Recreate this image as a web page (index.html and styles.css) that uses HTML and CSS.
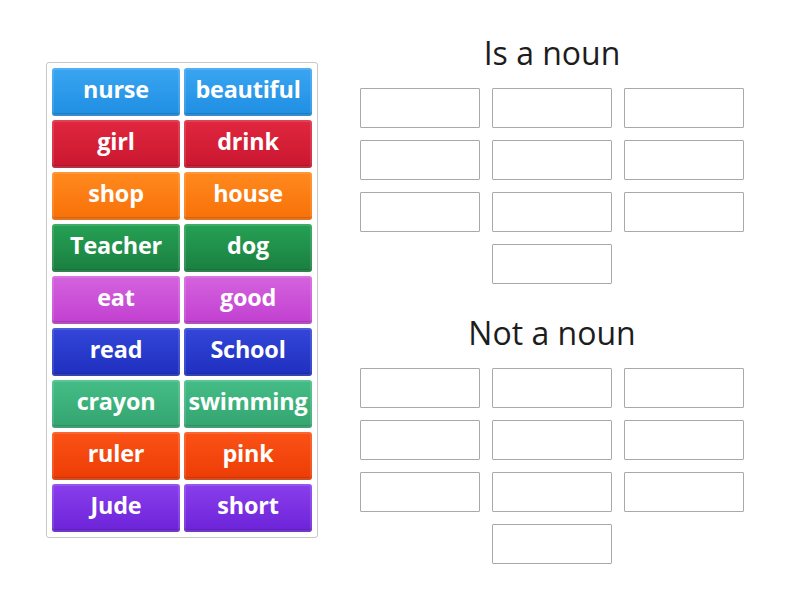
FILE: index.html
```html
<!DOCTYPE html>
<html>
<head>
<meta charset="utf-8">
<link rel="stylesheet" href="styles.css">
</head>
<body>
<div class="page">
  <div class="bank">
    <div class="tile c-blue">nurse</div>
    <div class="tile c-blue">beautiful</div>
    <div class="tile c-red">girl</div>
    <div class="tile c-red">drink</div>
    <div class="tile c-orange">shop</div>
    <div class="tile c-orange">house</div>
    <div class="tile c-green">Teacher</div>
    <div class="tile c-green">dog</div>
    <div class="tile c-violet">eat</div>
    <div class="tile c-violet">good</div>
    <div class="tile c-navy">read</div>
    <div class="tile c-navy">School</div>
    <div class="tile c-teal">crayon</div>
    <div class="tile c-teal">swimming</div>
    <div class="tile c-vermil">ruler</div>
    <div class="tile c-vermil">pink</div>
    <div class="tile c-purple">Jude</div>
    <div class="tile c-purple">short</div>
  </div>
  <div class="groups">
    <section class="group">
      <h2 class="group-title">Is a noun</h2>
      <div class="slots">
        <div class="slot"></div><div class="slot"></div><div class="slot"></div>
        <div class="slot"></div><div class="slot"></div><div class="slot"></div>
        <div class="slot"></div><div class="slot"></div><div class="slot"></div>
        <div class="slot slot-center"></div>
      </div>
    </section>
    <section class="group">
      <h2 class="group-title">Not a noun</h2>
      <div class="slots">
        <div class="slot"></div><div class="slot"></div><div class="slot"></div>
        <div class="slot"></div><div class="slot"></div><div class="slot"></div>
        <div class="slot"></div><div class="slot"></div><div class="slot"></div>
        <div class="slot slot-center"></div>
      </div>
    </section>
  </div>
</div>
</body>
</html>
```
FILE: styles.css
```css
html, body {
  margin: 0;
  padding: 0;
  background: #fff;
  font-family: "Open Sans", "Liberation Sans", sans-serif;
}
.page {
  display: flex;
  align-items: flex-start;
  padding-left: 46px;
}
.bank {
  margin-top: 62px;
  border: 1px solid #c8c8c8;
  border-radius: 3px;
  padding: 5px;
  display: grid;
  grid-template-columns: 128px 128px;
  grid-auto-rows: 48px;
  gap: 4px;
}
.tile {
  border-radius: 3px;
  color: #fff;
  font-weight: 700;
  font-size: 23.4px;
  line-height: 42px;
  text-align: center;
  white-space: nowrap;
  letter-spacing: -0.2px;
  box-shadow: inset 0 0 0 2px rgba(255,255,255,0.12), inset 0 -3px 0 rgba(0,0,0,0.12);
}
.c-blue { background: linear-gradient(#3aa6f2, #1f8ee2); }
.c-red { background: linear-gradient(#e0283f, #c9162f); }
.c-orange { background: linear-gradient(#ff8a1e, #f87008); }
.c-green { background: linear-gradient(#25a154, #1a7f40); }
.c-violet { background: linear-gradient(#d463de, #c23fd0); }
.c-navy { background: linear-gradient(#3347d8, #1f2fbf); }
.c-teal { background: linear-gradient(#45bd86, #33a46f); }
.c-vermil { background: linear-gradient(#fb5216, #ec3c05); }
.c-purple { background: linear-gradient(#8a3fec, #6c22d8); }

.groups {
  margin-left: 42px;
  padding-top: 33px;
  display: flex;
  flex-direction: column;
  gap: 29px;
  width: 384px;
}
.group-title {
  margin: 0 0 15px;
  font-weight: 400;
  font-size: 32px;
  line-height: 40px;
  color: #1d1d1d;
  text-align: center;
}
.slots {
  display: grid;
  grid-template-columns: repeat(3, 120px);
  grid-auto-rows: 40px;
  gap: 12px;
}
.slot {
  border: 1px solid #a9a9a9;
  border-radius: 1px;
  background: #fff;
}
.slot-center {
  grid-column: 2;
}
```
